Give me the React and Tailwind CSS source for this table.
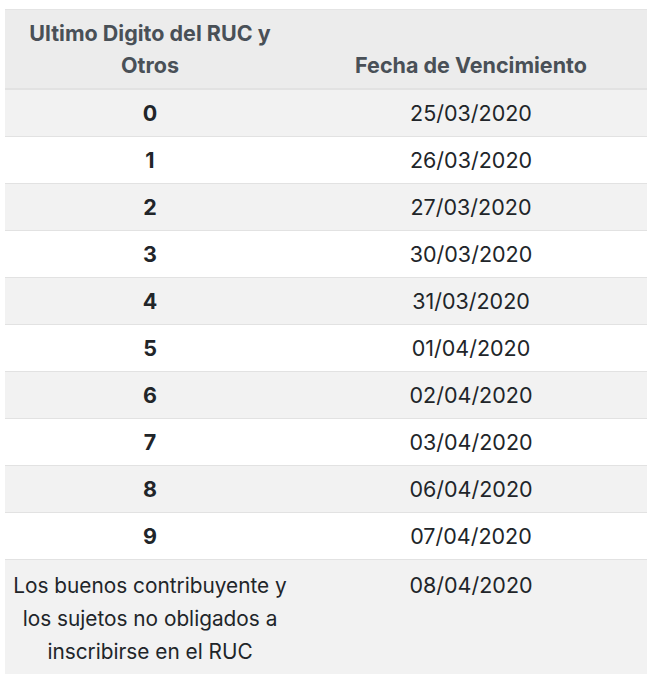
import React from "react";

const rows = [
  ["0", "25/03/2020"],
  ["1", "26/03/2020"],
  ["2", "27/03/2020"],
  ["3", "30/03/2020"],
  ["4", "31/03/2020"],
  ["5", "01/04/2020"],
  ["6", "02/04/2020"],
  ["7", "03/04/2020"],
  ["8", "06/04/2020"],
  ["9", "07/04/2020"],
];

export default function App() {
  return (
    <div className="bg-white w-[655px] h-[683px] pt-[9px] px-[5px] font-['Inter','Liberation_Sans',sans-serif]">
      <table className="w-[642px] border-collapse table-fixed">
        <colgroup>
          <col className="w-[290px]" />
          <col className="w-[352px]" />
        </colgroup>
        <thead>
          <tr className="bg-[#ececec] text-[#495057] border-t border-[#e4e4e4] border-b-2 border-b-[#e2e2e2]">
            <th className="align-bottom text-center font-bold text-[21.5px] leading-[32px] pt-[7px] pb-[7px] px-1 whitespace-nowrap">
              Ultimo Digito del RUC y<br />Otros
            </th>
            <th className="align-bottom text-center font-bold text-[21.5px] leading-[32px] pt-[7px] pb-[7px] px-3">
              Fecha de Vencimiento
            </th>
          </tr>
        </thead>
        <tbody className="text-[#212529] text-[21.5px] leading-[32px]">
          {rows.map(([digit, date], idx) => (
            <tr
              key={digit}
              className={`border-t border-[#e2e2e2] ${idx % 2 === 0 ? "bg-[#f2f2f2]" : "bg-white"}`}
            >
              <td className="text-center font-bold py-[7px] px-3">{digit}</td>
              <td className="text-center py-[7px] px-3">{date}</td>
            </tr>
          ))}
          <tr className="border-t border-[#e2e2e2] bg-[#f2f2f2]">
            <td className="align-top text-center text-[20.8px] leading-[33px] pt-[9px] pb-[6px] px-0 whitespace-nowrap">
              Los buenos contribuyente y<br />
              los sujetos no obligados a<br />
              inscribirse en el RUC
            </td>
            <td className="align-top text-center leading-[33px] pt-[9px] pb-[6px] px-3">08/04/2020</td>
          </tr>
        </tbody>
      </table>
    </div>
  );
}
